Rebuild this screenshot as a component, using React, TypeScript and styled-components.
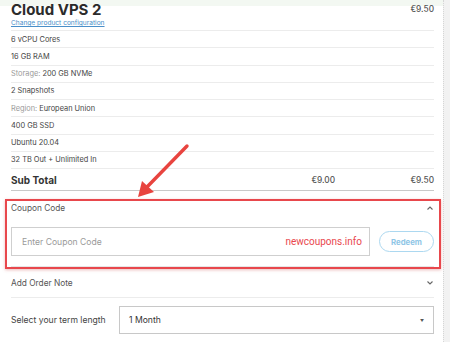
import React from "react";
import styled, { createGlobalStyle } from "styled-components";

const GlobalStyle = createGlobalStyle`
  html, body {
    margin: 0;
    padding: 0;
    background: #fff;
    font-family: Inter, "Liberation Sans", Arial, sans-serif;
    -webkit-font-smoothing: antialiased;
  }
`;

const Page = styled.div`
  position: relative;
  display: flex;
  width: 450px;
  height: 342px;
  overflow: hidden;
`;

const Main = styled.div`
  width: 443px;
  padding: 0 9px 0 11px;
  box-sizing: border-box;
  background: linear-gradient(to bottom, #f3f8f2 0, #f3f8f2 6px, #fff 6px);
`;

const Scrollbar = styled.div`
  flex: 1;
  background: #f2f2f2;
  border-left: 1px dotted #d6d6d6;
`;

const Header = styled.div`
  height: 30px;
  display: flex;
  justify-content: space-between;
  border-bottom: 1px solid #ececec;
  box-sizing: content-box;
`;

const TitleBlock = styled.div`
  padding-top: 1px;
`;

const Title = styled.div`
  font-size: 15px;
  line-height: 18px;
  font-weight: 700;
  color: #2b2b2b;
`;

const ConfigLink = styled.a`
  display: block;
  font-size: 6.6px;
  line-height: 8px;
  color: #4a8fc9;
  text-decoration: underline;
`;

const Price = styled.div`
  font-size: 8.3px;
  color: #555;
  font-weight: 500;
`;

const TopPrice = styled(Price)`
  padding-top: 4px;
`;

const Row = styled.div`
  height: 16.25px;
  display: flex;
  align-items: center;
  border-bottom: 1px solid #ececec;
  font-size: 7.4px;
  color: #444;
`;

const Label = styled.span`
  color: #9a9a9a;
  margin-right: 2px;
`;

const SubTotalRow = styled.div`
  height: 21px;
  display: flex;
  align-items: center;
  border-bottom: 1px solid #c9c9c9;
`;

const SubTotalLabel = styled.div`
  flex: 1;
  font-size: 10px;
  font-weight: 700;
  color: #333;
`;

const SubPrice = styled(Price)<{ $w: number }>`
  width: ${({ $w }) => $w}px;
  text-align: right;
`;

const CouponSection = styled.div`
  margin: 8px -7px 0 -6px;
  padding: 0 5px 0 4px;
  border: 2px solid #e8474c;
  box-shadow: 0 1px 3px rgba(200, 60, 60, 0.35);
`;

const SectionHead = styled.div<{ $h: number }>`
  height: ${({ $h }) => $h}px;
  display: flex;
  align-items: center;
  justify-content: space-between;
  font-size: 8.3px;
  color: #555;
`;

const Chevron = styled.svg`
  width: 8px;
  height: 6px;
`;

const CouponBody = styled.div`
  display: flex;
  align-items: center;
  gap: 9px;
  margin-top: 12px;
  padding-bottom: 10px;
  border-bottom: 1px solid #e6e6e6;
`;

const CouponInput = styled.div`
  width: 359px;
  height: 29px;
  box-sizing: border-box;
  border: 1px solid #cfcfcf;
  display: flex;
  align-items: center;
  justify-content: space-between;
  padding: 0 7px 0 10px;
`;

const Placeholder = styled.span`
  font-size: 8.6px;
  color: #9a9a9a;
`;

const Watermark = styled.span`
  font-family: Roboto, "Liberation Sans", sans-serif;
  font-size: 10px;
  color: #e9474e;
`;

const RedeemButton = styled.button`
  flex: 1;
  height: 21px;
  border: 1px solid #acd8f0;
  border-radius: 11px;
  background: #fff;
  color: #8fc6e6;
  font-family: Inter, "Liberation Sans", sans-serif;
  font-size: 7.8px;
  font-weight: 700;
  padding: 0;
`;

const NoteRow = styled(SectionHead)`
  border-bottom: 1px solid #ececec;
`;

const TermRow = styled.div`
  display: flex;
  align-items: center;
  padding-top: 8px;
  gap: 10px;
`;

const TermLabel = styled.div`
  font-size: 8.6px;
  color: #444;
  width: 98px;
`;

const Select = styled.div`
  flex: 1;
  height: 28px;
  box-sizing: border-box;
  border: 1px solid #c8c8c8;
  display: flex;
  align-items: center;
  justify-content: space-between;
  padding: 0 9px;
  font-size: 8.6px;
  color: #333;
`;

const Caret = styled.span`
  font-size: 4px;
  color: #555;
`;

const Arrow = styled.svg`
  position: absolute;
  left: 0;
  top: 0;
  pointer-events: none;
`;

const specs: { label?: string; value: string }[] = [
  { value: "6 vCPU Cores" },
  { value: "16 GB RAM" },
  { label: "Storage:", value: "200 GB NVMe" },
  { value: "2 Snapshots" },
  { label: "Region:", value: "European Union" },
  { value: "400 GB SSD" },
  { value: "Ubuntu 20.04" },
  { value: "32 TB Out + Unlimited In" },
];

const App: React.FC = () => {
  return (
    <Page>
      <GlobalStyle />
      <Main>
        <Header>
          <TitleBlock>
            <Title>Cloud VPS 2</Title>
            <ConfigLink>Change product configuration</ConfigLink>
          </TitleBlock>
          <TopPrice>€9.50</TopPrice>
        </Header>
        {specs.map((s, i) => (
          <Row key={i}>
            {s.label && <Label>{s.label}</Label>}
            {s.value}
          </Row>
        ))}
        <SubTotalRow>
          <SubTotalLabel>Sub Total</SubTotalLabel>
          <SubPrice $w={60}>€9.00</SubPrice>
          <SubPrice $w={99}>€9.50</SubPrice>
        </SubTotalRow>
        <CouponSection>
          <SectionHead $h={14}>
            Coupon Code
            <Chevron viewBox="0 0 8 6">
              <path d="M1.5 4.5 L4 2 L6.5 4.5" fill="none" stroke="#666" strokeWidth="1.1" />
            </Chevron>
          </SectionHead>
          <CouponBody>
            <CouponInput>
              <Placeholder>Enter Coupon Code</Placeholder>
              <Watermark>newcoupons.info</Watermark>
            </CouponInput>
            <RedeemButton>Redeem</RedeemButton>
          </CouponBody>
        </CouponSection>
        <NoteRow $h={28}>
          Add Order Note
          <Chevron viewBox="0 0 8 6">
            <path d="M1.5 1.5 L4 4 L6.5 1.5" fill="none" stroke="#666" strokeWidth="1.1" />
          </Chevron>
        </NoteRow>
        <TermRow>
          <TermLabel>Select your term length</TermLabel>
          <Select>
            1 Month
            <Caret>▼</Caret>
          </Select>
        </TermRow>
      </Main>
      <Scrollbar />
      <Arrow width="450" height="342" viewBox="0 0 450 342">
        <line x1="187" y1="146" x2="147" y2="187" stroke="#e8443f" strokeWidth="3.4" strokeLinecap="round" />
        <polygon points="138,197 142,181 154,192" fill="#e8443f" />
      </Arrow>
    </Page>
  );
};

export default App;
